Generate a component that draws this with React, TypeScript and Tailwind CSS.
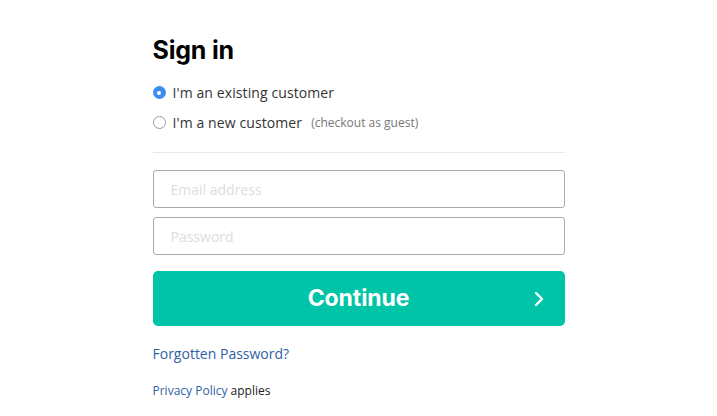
import React from "react";

const SignIn = () => {
  return (
    <div className="min-h-screen bg-white flex justify-center font-['Open_Sans',sans-serif]">
      <div className="w-[412px] pt-[34px]">
        <h1 className="text-[25px] font-bold text-black font-['Inter',sans-serif] leading-[32px] tracking-[-0.2px]">
          Sign in
        </h1>

        <div className="mt-[17px] flex flex-col gap-[11px]">
          {/* existing customer - selected */}
          <label className="flex items-center h-[19px]">
            <span className="w-[13px] h-[13px] rounded-full bg-[#3b8ef0] flex items-center justify-center">
              <span className="w-[4px] h-[4px] rounded-full bg-white" />
            </span>
            <span className="ml-[7px] text-[14px] text-[#333] tracking-[0.1px]">
              I'm an existing customer
            </span>
          </label>

          {/* new customer */}
          <label className="flex items-center h-[19px]">
            <span className="w-[13px] h-[13px] rounded-full border border-[#999] bg-white" />
            <span className="ml-[7px] text-[14px] text-[#333] tracking-[0.1px]">
              I'm a new customer
            </span>
            <span className="ml-[9px] text-[12px] text-[#777]">
              (checkout as guest)
            </span>
          </label>
        </div>

        <div className="mt-[20px] border-t border-[#e8e8e8]" />

        <div className="mt-[17px] flex flex-col gap-[9px]">
          <input
            type="email"
            placeholder="Email address"
            className="h-[38px] w-full rounded-[3px] border border-[#aaa] px-[17px] text-[14px] text-[#333] placeholder:text-[#ddd] outline-none"
          />
          <input
            type="password"
            placeholder="Password"
            className="h-[38px] w-full rounded-[3px] border border-[#aaa] px-[17px] text-[14px] text-[#333] placeholder:text-[#ddd] outline-none"
          />
        </div>

        <button className="mt-[16px] relative h-[55px] w-full rounded-[5px] bg-[#00c4a7] flex items-center justify-center text-white">
          <span className="text-[23px] font-bold font-['Inter',sans-serif] tracking-[-0.1px]">
            Continue
          </span>
          <svg
            className="absolute right-[20px] top-1/2 -translate-y-1/2"
            width="12"
            height="16"
            viewBox="0 0 12 16"
            fill="none"
          >
            <path
              d="M3 2 L9 8 L3 14"
              stroke="white"
              strokeWidth="2.4"
              strokeLinecap="round"
              strokeLinejoin="round"
            />
          </svg>
        </button>

        <a href="#" className="block mt-[18px] text-[14px] text-[#2f5fa5] leading-[20px]">
          Forgotten Password?
        </a>

        <p className="mt-[18px] text-[12px] text-[#222] leading-[18px]">
          <a href="#" className="text-[#2f5fa5]">
            Privacy Policy
          </a>{" "}
          applies
        </p>
      </div>
    </div>
  );
};

export default SignIn;
